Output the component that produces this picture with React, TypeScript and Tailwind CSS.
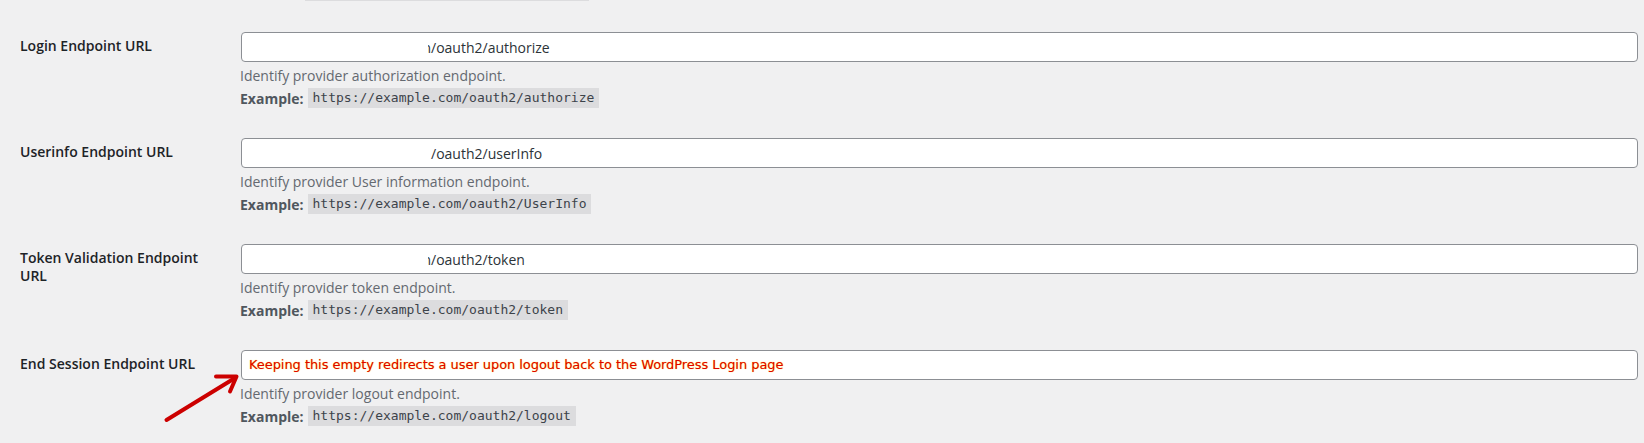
import React from "react";

interface EndpointRow {
  label: string;
  value: string;
  clipped?: boolean;
  help: string;
  example: string;
  warning?: string;
}

const rows: EndpointRow[] = [
  {
    label: "Login Endpoint URL",
    value: "/oauth2/authorize",
    clipped: true,
    help: "Identify provider authorization endpoint.",
    example: "https://example.com/oauth2/authorize",
  },
  {
    label: "Userinfo Endpoint URL",
    value: "/oauth2/userInfo",
    help: "Identify provider User information endpoint.",
    example: "https://example.com/oauth2/UserInfo",
  },
  {
    label: "Token Validation Endpoint URL",
    value: "/oauth2/token",
    clipped: true,
    help: "Identify provider token endpoint.",
    example: "https://example.com/oauth2/token",
  },
  {
    label: "End Session Endpoint URL",
    value: "",
    help: "Identify provider logout endpoint.",
    example: "https://example.com/oauth2/logout",
    warning:
      "Keeping this empty redirects a user upon logout back to the WordPress Login page",
  },
];

const sans = "font-['Open_Sans','Noto_Sans',sans-serif]";

const FieldBox: React.FC<{ row: EndpointRow }> = ({ row }) => {
  if (row.warning) {
    return (
      <div className="ml-[1px] flex h-[30px] items-center rounded-[4px] border border-[#8c8f94] bg-white pl-[7px]">
        <span className="font-['DejaVu_Sans',sans-serif] text-[12.9px] text-[#e00000] [text-shadow:0_0_1px_#ffd800]">
          {row.warning}
        </span>
      </div>
    );
  }
  return (
    <div
      className={`ml-[1px] flex h-[30px] items-center rounded-[4px] border border-[#8c8f94] bg-white text-[14px] text-[#2c3338] ${
        row.clipped ? "pl-[186px]" : "pl-[189px]"
      }`}
    >
      {row.clipped && (
        <span className="inline-flex w-[3px] justify-end overflow-hidden">
          <span>n</span>
        </span>
      )}
      <span>{row.value}</span>
    </div>
  );
};

const App: React.FC = () => {
  return (
    <div className={`relative h-[443px] w-full overflow-hidden bg-[#f0f0f1] ${sans}`}>
      <div className="ml-[305px] h-[1px] w-[284px] bg-[#dcdcde]" />
      <div className="mt-[16px] pl-[20px]">
        {rows.map((row) => (
          <div key={row.label} className="flex h-[106px] pt-[15px]">
            <div className="w-[210px] shrink-0 pr-[10px] pt-[5px] text-[14px] font-semibold leading-[18px] text-[#1d2327]">
              {row.label}
            </div>
            <div className="flex-1 pl-[10px] pr-[6px]">
              <FieldBox row={row} />
              <div className="mt-[3px] text-[14px] leading-[21px] text-[#646970]">
                {row.help}
              </div>
              <div className="mt-[2px] flex h-[20px] items-center text-[14px] text-[#50575e]">
                <span className="font-bold">Example:</span>
                <span className="ml-[4px] h-[20px] bg-[#dcdcde] px-[5px] font-['DejaVu_Sans_Mono',monospace] text-[13px] leading-[20px] text-[#3c434a]">
                  {row.example}
                </span>
              </div>
            </div>
          </div>
        ))}
      </div>
      <svg
        className="absolute left-[160px] top-[370px]"
        width="85"
        height="56"
        viewBox="160 370 85 56"
        fill="none"
        stroke="#cc0000"
        strokeWidth="4"
        strokeLinecap="round"
        strokeLinejoin="round"
      >
        <path d="M166.5 420 L235 378" />
        <path d="M216 376.5 L236.5 376.5 L230 391.5" />
      </svg>
    </div>
  );
};

export default App;
